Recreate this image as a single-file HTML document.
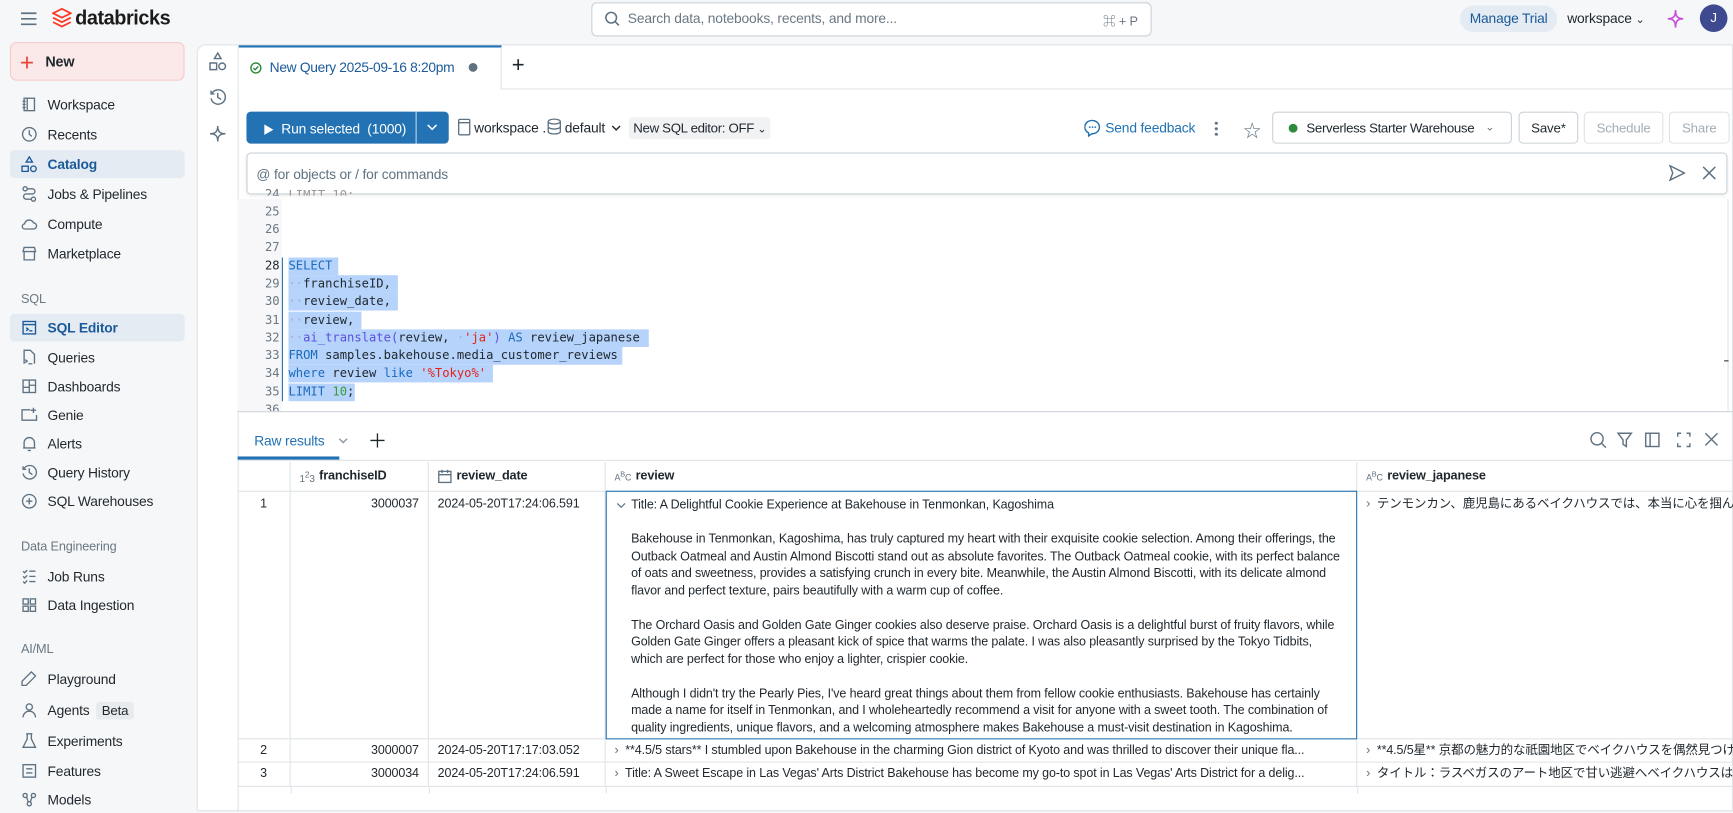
<!DOCTYPE html>
<html><head><meta charset="utf-8">
<style>
*{box-sizing:border-box;margin:0;padding:0}
html,body{width:1733px;height:811px;overflow:hidden;background:#f6f7f9}
#w{position:absolute;left:0;top:0;width:1568px;height:734px;transform:scale(1.10523);transform-origin:0 0;font-family:"Liberation Sans","Noto Sans CJK JP",sans-serif;color:#1f272d;font-size:12.5px;letter-spacing:-0.15px}
.abs{position:absolute;white-space:nowrap}
.side a{position:absolute;left:9px;width:158px;height:25px;display:flex;align-items:center;padding-left:10px;font-size:12.5px;color:#1f272d;border-radius:4px;white-space:nowrap}
.side a svg{width:15px;height:15px;margin-right:9px;stroke:#5f7281;fill:none;stroke-width:1.3}
.side a.act{background:#e4ebf3;color:#1b5a99;font-weight:bold}
.side a.act svg{stroke:#1b5a99}
.lbl{position:absolute;left:19px;font-size:11.5px;color:#6a7883}
.mono{font-family:"DejaVu Sans Mono","Liberation Mono",monospace;font-size:11px;letter-spacing:0}
.ln{position:absolute;left:215px;width:38px;text-align:right;color:#6a7883}
.code{position:absolute;left:261px;white-space:pre;line-height:16px}
.sel{background:#b6d3fb}
.kw{color:#1a6bbd}.fn{color:#5a4fe0}.st{color:#e5231b}.nm{color:#3a9b3a}
.th{position:absolute;top:418px;height:26px;border-right:1px solid #e0e4e8;font-size:11.5px;font-weight:bold;display:flex;align-items:center;padding-left:8px;white-space:nowrap}
.cell{position:absolute;font-size:11.3px;border-right:1px solid #e0e4e8;border-bottom:1px solid #e0e4e8;padding:5px 8px;line-height:15.5px;overflow:hidden;white-space:nowrap;letter-spacing:-0.1px}
.btn{position:absolute;top:101px;height:29px;border:1px solid #cbd2d8;border-radius:4px;display:flex;align-items:center;justify-content:center;font-size:12px;background:#fff;white-space:nowrap}
</style></head><body><div id="w">
<svg class="abs" style="left:18px;top:10px" width="16" height="14"><path d="M1 2h14M1 7h14M1 12h14" stroke="#5f7281" stroke-width="1.5"/></svg>
<svg class="abs" style="left:47px;top:7px" width="18" height="18" viewBox="0 0 18 18"><path d="M1 5l8-4 8 4-8 4zM1 9l8 4 8-4M1 13l8 4 8-4" fill="none" stroke="#ff3621" stroke-width="1.6"/></svg>
<div class="abs" style="left:68px;top:6px;font-size:18px;font-weight:bold;letter-spacing:-0.4px;color:#1b1b1b">databricks</div>
<div class="abs" style="left:535px;top:2px;width:507px;height:31px;border:1px solid #cbd2d8;border-radius:5px;background:#fff"></div>
<svg class="abs" style="left:547px;top:10px" width="14" height="14"><circle cx="6" cy="6" r="4.8" fill="none" stroke="#5f7281" stroke-width="1.4"/><path d="M9.5 9.5l3.5 3.5" stroke="#5f7281" stroke-width="1.4"/></svg>
<div class="abs" style="left:568px;top:10px;font-size:12.5px;color:#6a7883">Search data, notebooks, recents, and more...</div>
<div class="abs" style="left:998px;top:11px;font-size:11.5px;color:#6a7883">⌘ + P</div>
<div class="abs" style="left:1321px;top:5px;width:88px;height:24px;border-radius:12px;background:#e4ebf3;color:#1b5a99;font-size:12.5px;text-align:center;line-height:24px">Manage Trial</div>
<div class="abs" style="left:1418px;top:10px;font-size:12.5px">workspace <span style="font-size:10px">⌄</span></div>
<svg class="abs" style="left:1508px;top:8px" width="16" height="18"><path d="M8 1C8 7 10 9 15 9 10 9 8 11 8 17 8 11 6 9 1 9 6 9 8 7 8 1z" fill="none" stroke="#c94fd6" stroke-width="1.5"/></svg>
<div class="abs" style="left:1538px;top:4px;width:25px;height:25px;border-radius:50%;background:#3e4a8f;color:#fff;text-align:center;line-height:25px;font-size:12px">J</div>

<div class="side">
<div class="abs" style="left:9px;top:38px;width:158px;height:35px;background:#fbe9e9;border:1px solid #f5c9c9;border-radius:6px"></div>
<div class="abs" style="left:18px;top:44px;font-size:22px;color:#e8453c;font-weight:300">+</div>
<div class="abs" style="left:41px;top:48px;font-weight:bold;font-size:13px">New</div>
<a style="top:82px"><svg viewBox="0 0 16 16"><rect x="3" y="2" width="10" height="12"/><path d="M6 2v12M1.5 5h3M1.5 8h3M1.5 11h3"/></svg>Workspace</a>
<a style="top:109px"><svg viewBox="0 0 16 16"><circle cx="8" cy="8" r="6.5"/><path d="M8 4v4l2.5 2"/></svg>Recents</a>
<a class="act" style="top:136px"><svg viewBox="0 0 16 16"><path d="M8 1l3 5H5zM1 10h6v5H1z"/><circle cx="12" cy="12.5" r="2.7"/></svg>Catalog</a>
<a style="top:163px"><svg viewBox="0 0 16 16"><circle cx="4" cy="3" r="2"/><circle cx="12" cy="13" r="2"/><path d="M6 3h5a2.5 2.5 0 010 5H5a2.5 2.5 0 000 5h5"/></svg>Jobs &amp; Pipelines</a>
<a style="top:190px"><svg viewBox="0 0 16 16"><path d="M4 13h8a3 3 0 000-6 4.5 4.5 0 00-8.5 1A2.5 2.5 0 004 13z"/></svg>Compute</a>
<a style="top:217px"><svg viewBox="0 0 16 16"><path d="M2 6l1-4h10l1 4zM3 6v8h10V6"/></svg>Marketplace</a>
<div class="lbl" style="top:265px">SQL</div>
<a class="act" style="top:284px"><svg viewBox="0 0 16 16"><rect x="2" y="2" width="12" height="12"/><path d="M2 5h12M5 8l2 1.5L5 11M8 11h3"/></svg>SQL Editor</a>
<a style="top:311px"><svg viewBox="0 0 16 16"><path d="M3 14V1h6l4 4v9M4 10l2 1.5L4 13M7 14h4"/></svg>Queries</a>
<a style="top:337px"><svg viewBox="0 0 16 16"><rect x="2" y="2" width="12" height="12"/><path d="M8 2v12M8 7h6M2 9h6"/></svg>Dashboards</a>
<a style="top:363px"><svg viewBox="0 0 16 16"><path d="M9 3H1v10h14V8M12 1v5M9.5 3.5h5"/></svg>Genie</a>
<a style="top:389px"><svg viewBox="0 0 16 16"><path d="M3 12V7a5 5 0 0110 0v5zM2 12h12M6.5 14.5h3"/></svg>Alerts</a>
<a style="top:415px"><svg viewBox="0 0 16 16"><path d="M2.5 5A6.5 6.5 0 112 9M2 2v3h3M8 4v4l3 2"/></svg>Query History</a>
<a style="top:441px"><svg viewBox="0 0 16 16"><path d="M8 1.5a6.5 6.5 0 100 13 6.5 6.5 0 000-13zM8 5v6M5 8h6"/></svg>SQL Warehouses</a>
<div class="lbl" style="top:489px">Data Engineering</div>
<a style="top:509px"><svg viewBox="0 0 16 16"><path d="M2 3l1.5 1.5L6 2M2 8l1.5 1.5L6 7M2 13l1.5 1.5L6 12M8 3h6M8 8h6M8 13h6"/></svg>Job Runs</a>
<a style="top:535px"><svg viewBox="0 0 16 16"><rect x="2" y="2" width="5" height="5"/><rect x="9" y="2" width="5" height="5"/><rect x="2" y="9" width="5" height="5"/><rect x="9" y="9" width="5" height="5"/></svg>Data Ingestion</a>
<div class="lbl" style="top:582px">AI/ML</div>
<a style="top:602px"><svg viewBox="0 0 16 16"><path d="M10 1l4 4-9 9H1v-4z"/></svg>Playground</a>
<a style="top:630px"><svg viewBox="0 0 16 16"><circle cx="8" cy="5" r="3"/><path d="M2 15a6 6 0 0112 0"/></svg>Agents <span style="margin-left:6px;background:#e8ebee;border-radius:3px;padding:1px 5px;font-size:12px">Beta</span></a>
<a style="top:658px"><svg viewBox="0 0 16 16"><path d="M6 1v5L2 14h12L10 6V1M5 1h6"/></svg>Experiments</a>
<a style="top:685px"><svg viewBox="0 0 16 16"><rect x="2" y="2" width="12" height="12"/><path d="M5 6h6M5 10h6"/></svg>Features</a>
<a style="top:711px"><svg viewBox="0 0 16 16"><circle cx="4" cy="4" r="2"/><circle cx="12" cy="4" r="2"/><circle cx="8" cy="12" r="2"/><path d="M5.5 5.5l1.5 5M10.5 5.5l-1.5 5"/></svg>Models</a>
</div>

<div class="abs" style="left:178px;top:40px;width:1390px;height:694px;background:#fff;border:1px solid #e0e4e8;border-radius:8px 0 0 0"></div>
<div class="abs" style="left:215px;top:41px;width:1px;height:693px;background:#e0e4e8"></div>
<svg class="abs" style="left:189px;top:47px" width="16" height="18" viewBox="0 0 16 18"><path d="M8 1l3 5H5zM1 10h6v6H1z" fill="none" stroke="#5f7281" stroke-width="1.3"/><circle cx="12" cy="13" r="3" fill="none" stroke="#5f7281" stroke-width="1.3"/></svg>
<svg class="abs" style="left:189px;top:80px" width="16" height="16" viewBox="0 0 16 16"><path d="M2.5 5A6.5 6.5 0 112 9M2 2v3h3M8 4v4l3 2" fill="none" stroke="#5f7281" stroke-width="1.3"/></svg>
<svg class="abs" style="left:189px;top:113px" width="16" height="16"><path d="M8 1C8 6 10 8 15 8 10 8 8 10 8 15 8 10 6 8 1 8 6 8 8 6 8 1z" fill="none" stroke="#5f7281" stroke-width="1.3"/></svg>
<div class="abs" style="left:216px;top:80px;width:1352px;height:1px;background:#e0e4e8"></div>
<div class="abs" style="left:216px;top:41px;width:238px;height:40px;background:#fff;border-top:2px solid #2272b4;border-right:1px solid #e0e4e8"></div>
<svg class="abs" style="left:226px;top:56px" width="11" height="11"><circle cx="5.5" cy="5.5" r="4.5" fill="none" stroke="#2e8b3c" stroke-width="1.3"/><path d="M3.3 5.6l1.6 1.5 2.8-3" fill="none" stroke="#2e8b3c" stroke-width="1.3"/></svg>
<div class="abs" style="left:244px;top:54px;font-size:12.5px;color:#1b5a99;letter-spacing:-0.3px">New Query 2025-09-16 8:20pm</div>
<div class="abs" style="left:424px;top:57px;width:8px;height:8px;border-radius:50%;background:#5f7281"></div>
<div class="abs" style="left:463px;top:48px;font-size:20px;color:#1f272d;font-weight:300">+</div>
<div class="abs" style="left:223px;top:101px;width:183px;height:29px;background:#2272b4;border-radius:4px"></div>
<div class="abs" style="left:376px;top:101px;width:1px;height:29px;background:#fff;opacity:.7"></div>
<div class="abs" style="left:238px;top:109px;color:#fff;font-size:12.5px"><span style="font-size:10px">▶</span>&nbsp; Run selected&nbsp; (1000)</div>
<svg class="abs" style="left:386px;top:112px" width="10" height="7"><path d="M1 1l4 4 4-4" fill="none" stroke="#fff" stroke-width="1.4"/></svg>
<svg class="abs" style="left:414px;top:107px" width="12" height="16"><rect x="1" y="1" width="10" height="14" rx="1" fill="none" stroke="#5f7281" stroke-width="1.2"/><path d="M1 4h10" stroke="#5f7281" stroke-width="1.2"/></svg>
<div class="abs" style="left:429px;top:109px;font-size:12.5px">workspace .</div>
<svg class="abs" style="left:495px;top:107px" width="13" height="15"><ellipse cx="6.5" cy="3" rx="5.5" ry="2.2" fill="none" stroke="#5f7281" stroke-width="1.2"/><path d="M1 3v9c0 3 11 3 11 0V3M1 7.5c0 3 11 3 11 0" fill="none" stroke="#5f7281" stroke-width="1.2"/></svg>
<div class="abs" style="left:511px;top:109px;font-size:12.5px">default</div>
<svg class="abs" style="left:553px;top:113px" width="9" height="6"><path d="M1 1l3.5 3.5L8 1" fill="none" stroke="#1f272d" stroke-width="1.3"/></svg>
<div class="abs" style="left:569px;top:106px;height:20px;padding:0 4px;background:#f0f2f4;border-radius:3px;font-size:12px;line-height:20px;letter-spacing:-0.3px">New SQL editor: OFF <span style="font-size:10px">⌄</span></div>
<svg class="abs" style="left:981px;top:108px" width="15" height="16"><path d="M7.5 1a6.5 6 0 00-3.5 11.3V15l3-2a6.5 6 0 10.5-12z" fill="none" stroke="#2272b4" stroke-width="1.3"/><circle cx="5" cy="7" r=".8" fill="#2272b4"/><circle cx="7.5" cy="7" r=".8" fill="#2272b4"/><circle cx="10" cy="7" r=".8" fill="#2272b4"/></svg>
<div class="abs" style="left:1000px;top:109px;font-size:12.5px;color:#2272b4">Send feedback</div>
<div class="abs" style="left:1099px;top:109px;width:3px;height:14px;background:radial-gradient(circle,#5f7281 1.3px,transparent 1.5px) 0 0/3px 5px"></div>
<div class="abs" style="left:1125px;top:105px;font-size:16px;color:#5f7281">☆</div>
<div class="btn" style="left:1151px;width:217px;justify-content:flex-start;padding-left:14px;letter-spacing:-0.3px"><span style="width:8px;height:8px;border-radius:50%;background:#2e8b3c;margin-right:8px"></span>Serverless Starter Warehouse <span style="margin-left:10px;color:#5f7281;font-size:10px">⌄</span></div>
<div class="btn" style="left:1374px;width:54px">Save*</div>
<div class="btn" style="left:1433px;width:72px;color:#a4adb5;border-color:#dfe3e7">Schedule</div>
<div class="btn" style="left:1510px;width:55px;color:#a4adb5;border-color:#dfe3e7">Share</div>
<div class="abs" style="left:223px;top:138px;width:1340px;height:38px;border:1px solid #cbd2d8;border-radius:4px;box-shadow:0 1px 3px rgba(0,0,0,.08)"></div>
<div class="abs" style="left:232px;top:151px;font-size:12.5px;color:#5f7281">@ for objects or / for commands</div>
<svg class="abs" style="left:1510px;top:149px" width="15" height="15"><path d="M1 1l13 6.5L1 14l2.5-6.5z" fill="none" stroke="#5f7281" stroke-width="1.3"/></svg>
<svg class="abs" style="left:1540px;top:150px" width="13" height="13"><path d="M1 1l11 11M12 1L1 12" stroke="#5f7281" stroke-width="1.4"/></svg>
<div class="abs" style="left:215px;top:180px;width:40px;height:192px;background:#f7f7f9"></div>
<div class="abs" style="left:1563px;top:180px;width:1px;height:192px;background:#e0e4e8"></div>
<div class="abs" style="left:255px;top:233px;width:1px;height:130px;background:#2272b4"></div>
<div class="abs" style="left:1560px;top:326px;width:4px;height:1px;background:#333"></div>
<div class="mono">
<div class="ln" style="top:169px;height:8px;overflow:hidden">24</div><div class="code" style="top:169px;color:#999;height:8px;overflow:hidden">LIMIT 10;</div>
<div class="ln" style="top:185px">25</div>
<div class="ln" style="top:201px">26</div>
<div class="ln" style="top:217px">27</div>
<div class="ln" style="top:234px;color:#1f272d">28</div><div class="code sel kw" style="top:233px;padding-right:5px">SELECT</div>
<div class="ln" style="top:250px">29</div><div class="code sel" style="top:249px;padding-right:6px"><span style="color:#aac">··</span>franchiseID,</div>
<div class="ln" style="top:266px">30</div><div class="code sel" style="top:265px;padding-right:6px"><span style="color:#aac">··</span>review_date,</div>
<div class="ln" style="top:283px">31</div><div class="code sel" style="top:282px;padding-right:6px"><span style="color:#aac">··</span>review,</div>
<div class="ln" style="top:299px">32</div><div class="code sel" style="top:298px;padding-right:8px"><span style="color:#aac">··</span><span class="fn">ai_translate(</span>review, <span style="color:#aac">·</span><span class="st">'ja'</span><span class="fn">)</span> <span class="kw">AS</span> review_japanese</div>
<div class="ln" style="top:315px">33</div><div class="code sel" style="top:314px;padding-right:4px"><span class="kw">FROM</span> samples.bakehouse.media_customer_reviews</div>
<div class="ln" style="top:331px">34</div><div class="code sel" style="top:330px;padding-right:6px"><span class="kw">where</span> review <span class="kw">like</span> <span class="st">'%Tokyo%'</span></div>
<div class="ln" style="top:348px">35</div><div class="code sel" style="top:347px"><span class="kw">LIMIT</span> <span class="nm">10</span>;</div>
<div class="ln" style="top:364px;height:8px;overflow:hidden">36</div>
</div>
<div class="abs" style="left:215px;top:372px;width:1353px;height:1px;background:#cbd2d8"></div>
<div class="abs" style="left:230px;top:392px;font-size:12.5px;color:#2272b4">Raw results</div>
<svg class="abs" style="left:306px;top:396px" width="9" height="6"><path d="M1 1l3.5 3.5L8 1" fill="none" stroke="#8a96a0" stroke-width="1.2"/></svg>
<svg class="abs" style="left:335px;top:392px" width="13" height="13"><path d="M6.5 0v13M0 6.5h13" stroke="#1f272d" stroke-width="1.2"/></svg>
<div class="abs" style="left:215px;top:413px;width:92px;height:3px;background:#2272b4"></div>
<div class="abs" style="left:215px;top:416px;width:1353px;height:1px;background:#e0e4e8"></div>
<svg class="abs" style="left:1438px;top:390px" width="120" height="16" fill="none" stroke="#5f7281" stroke-width="1.3">
<circle cx="7" cy="7" r="5.5"/><path d="M11 11l4 4"/>
<path d="M26 2h12l-4.5 6v6l-3-2V8z"/>
<rect x="51" y="2" width="12" height="12"/><path d="M55 2v12"/>
<path d="M80 5V2h3M88 2h3v3M91 11v3h-3M83 14h-3v-3"/>
<path d="M105 2l11 11M116 2l-11 11"/>
</svg>
<div class="abs" style="left:215px;top:444px;width:1353px;height:1px;background:#e0e4e8"></div>
<div class="th" style="left:215px;width:48px"></div>
<div class="th" style="left:263px;width:125px"><span style="font-size:9px;color:#5f7281;margin-right:4px;font-weight:normal">1<sup>2</sup>3</span>franchiseID</div>
<div class="th" style="left:388px;width:160px"><svg width="13" height="14" style="margin-right:4px"><rect x="1" y="2.5" width="11" height="10" fill="none" stroke="#5f7281" stroke-width="1.2"/><path d="M1 5.5h11M4 1v3M9 1v3" stroke="#5f7281" stroke-width="1.2"/></svg>review_date</div>
<div class="th" style="left:548px;width:680px"><span style="font-size:8px;color:#5f7281;margin-right:4px;font-weight:normal">A<sup>B</sup>C</span>review</div>
<div class="th" style="left:1228px;width:340px;border-right:none"><span style="font-size:8px;color:#5f7281;margin-right:4px;font-weight:normal">A<sup>B</sup>C</span>review_japanese</div>
<div class="cell" style="left:215px;top:444px;width:48px;height:225px;text-align:center">1</div>
<div class="cell" style="left:263px;top:444px;width:125px;height:225px;text-align:right">3000037</div>
<div class="cell" style="left:388px;top:444px;width:160px;height:225px">2024-05-20T17:24:06.591</div>
<div class="cell" style="left:548px;top:444px;width:680px;height:225px;border:1px solid #2272b4;white-space:normal;padding-left:22px;padding-right:10px">
<svg style="position:absolute;left:9px;top:10px" width="8" height="5"><path d="M0.5 0.5l3.5 3.5 3.5-3.5" fill="none" stroke="#5f7281" stroke-width="1.1"/></svg>
Title: A Delightful Cookie Experience at Bakehouse in Tenmonkan, Kagoshima<br><br>
Bakehouse in Tenmonkan, Kagoshima, has truly captured my heart with their exquisite cookie selection. Among their offerings, the Outback Oatmeal and Austin Almond Biscotti stand out as absolute favorites. The Outback Oatmeal cookie, with its perfect balance of oats and sweetness, provides a satisfying crunch in every bite. Meanwhile, the Austin Almond Biscotti, with its delicate almond flavor and perfect texture, pairs beautifully with a warm cup of coffee.<br><br>
The Orchard Oasis and Golden Gate Ginger cookies also deserve praise. Orchard Oasis is a delightful burst of fruity flavors, while Golden Gate Ginger offers a pleasant kick of spice that warms the palate. I was also pleasantly surprised by the Tokyo Tidbits, which are perfect for those who enjoy a lighter, crispier cookie.<br><br>
Although I didn't try the Pearly Pies, I've heard great things about them from fellow cookie enthusiasts. Bakehouse has certainly made a name for itself in Tenmonkan, and I wholeheartedly recommend a visit for anyone with a sweet tooth. The combination of quality ingredients, unique flavors, and a welcoming atmosphere makes Bakehouse a must-visit destination in Kagoshima.
</div>
<div class="cell" style="left:1228px;top:444px;width:340px;height:225px;border-right:none;padding-left:8px"><span style="color:#5f7281">›</span>&nbsp; テンモンカン、鹿児島にあるベイクハウスでは、本当に心を掴んだ</div>
<div class="cell" style="left:215px;top:669px;width:48px;height:21px;text-align:center;padding-top:3px">2</div>
<div class="cell" style="left:263px;top:669px;width:125px;height:21px;text-align:right;padding-top:3px">3000007</div>
<div class="cell" style="left:388px;top:669px;width:160px;height:21px;padding-top:3px">2024-05-20T17:17:03.052</div>
<div class="cell" style="left:548px;top:669px;width:680px;height:21px;padding-top:3px"><span style="color:#5f7281">›</span>&nbsp; **4.5/5 stars** I stumbled upon Bakehouse in the charming Gion district of Kyoto and was thrilled to discover their unique fla...</div>
<div class="cell" style="left:1228px;top:669px;width:340px;height:21px;border-right:none;padding-top:3px"><span style="color:#5f7281">›</span>&nbsp; **4.5/5星** 京都の魅力的な祇園地区でベイクハウスを偶然見つけ</div>
<div class="cell" style="left:215px;top:690px;width:48px;height:22px;text-align:center;padding-top:3px">3</div>
<div class="cell" style="left:263px;top:690px;width:125px;height:22px;text-align:right;padding-top:3px">3000034</div>
<div class="cell" style="left:388px;top:690px;width:160px;height:22px;padding-top:3px">2024-05-20T17:24:06.591</div>
<div class="cell" style="left:548px;top:690px;width:680px;height:22px;padding-top:3px"><span style="color:#5f7281">›</span>&nbsp; Title: A Sweet Escape in Las Vegas' Arts District Bakehouse has become my go-to spot in Las Vegas' Arts District for a delig...</div>
<div class="cell" style="left:1228px;top:690px;width:340px;height:22px;border-right:none;padding-top:3px"><span style="color:#5f7281">›</span>&nbsp; タイトル：ラスベガスのアート地区で甘い逃避へベイクハウスは、</div>
<div class="abs" style="left:263px;top:712px;width:1px;height:6px;background:#e0e4e8"></div>
<div class="abs" style="left:388px;top:712px;width:1px;height:6px;background:#e0e4e8"></div>
<div class="abs" style="left:548px;top:712px;width:1px;height:6px;background:#e0e4e8"></div>
<div class="abs" style="left:1228px;top:712px;width:1px;height:6px;background:#e0e4e8"></div>
</div></body></html>
